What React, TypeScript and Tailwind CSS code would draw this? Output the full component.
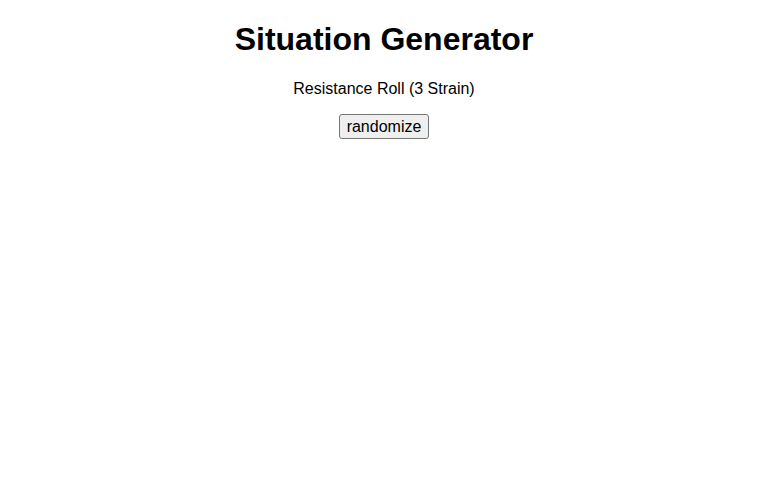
import { useState } from "react";

const situations = [
  "Resistance Roll (3 Strain)",
  "Desperate Position, Standard Effect",
  "Risky Position, Limited Effect",
  "Controlled Position, Great Effect",
];

export default function App() {
  const [index, setIndex] = useState(0);

  const randomize = () => {
    setIndex(Math.floor(Math.random() * situations.length));
  };

  return (
    <div className="min-h-[480px] bg-white text-center text-black font-['Liberation_Sans',Arial,sans-serif]">
      <h1 className="pt-[21px] mb-[22px] text-[32px] font-bold leading-[37px]">
        Situation Generator
      </h1>
      <p className="mb-4 text-base leading-[18px]">{situations[index]}</p>
      <button
        onClick={randomize}
        className="rounded-[3px] border border-[#767676] bg-[#efefef] px-[7px] py-[2px] text-base leading-[19px] text-black"
      >
        randomize
      </button>
    </div>
  );
}
